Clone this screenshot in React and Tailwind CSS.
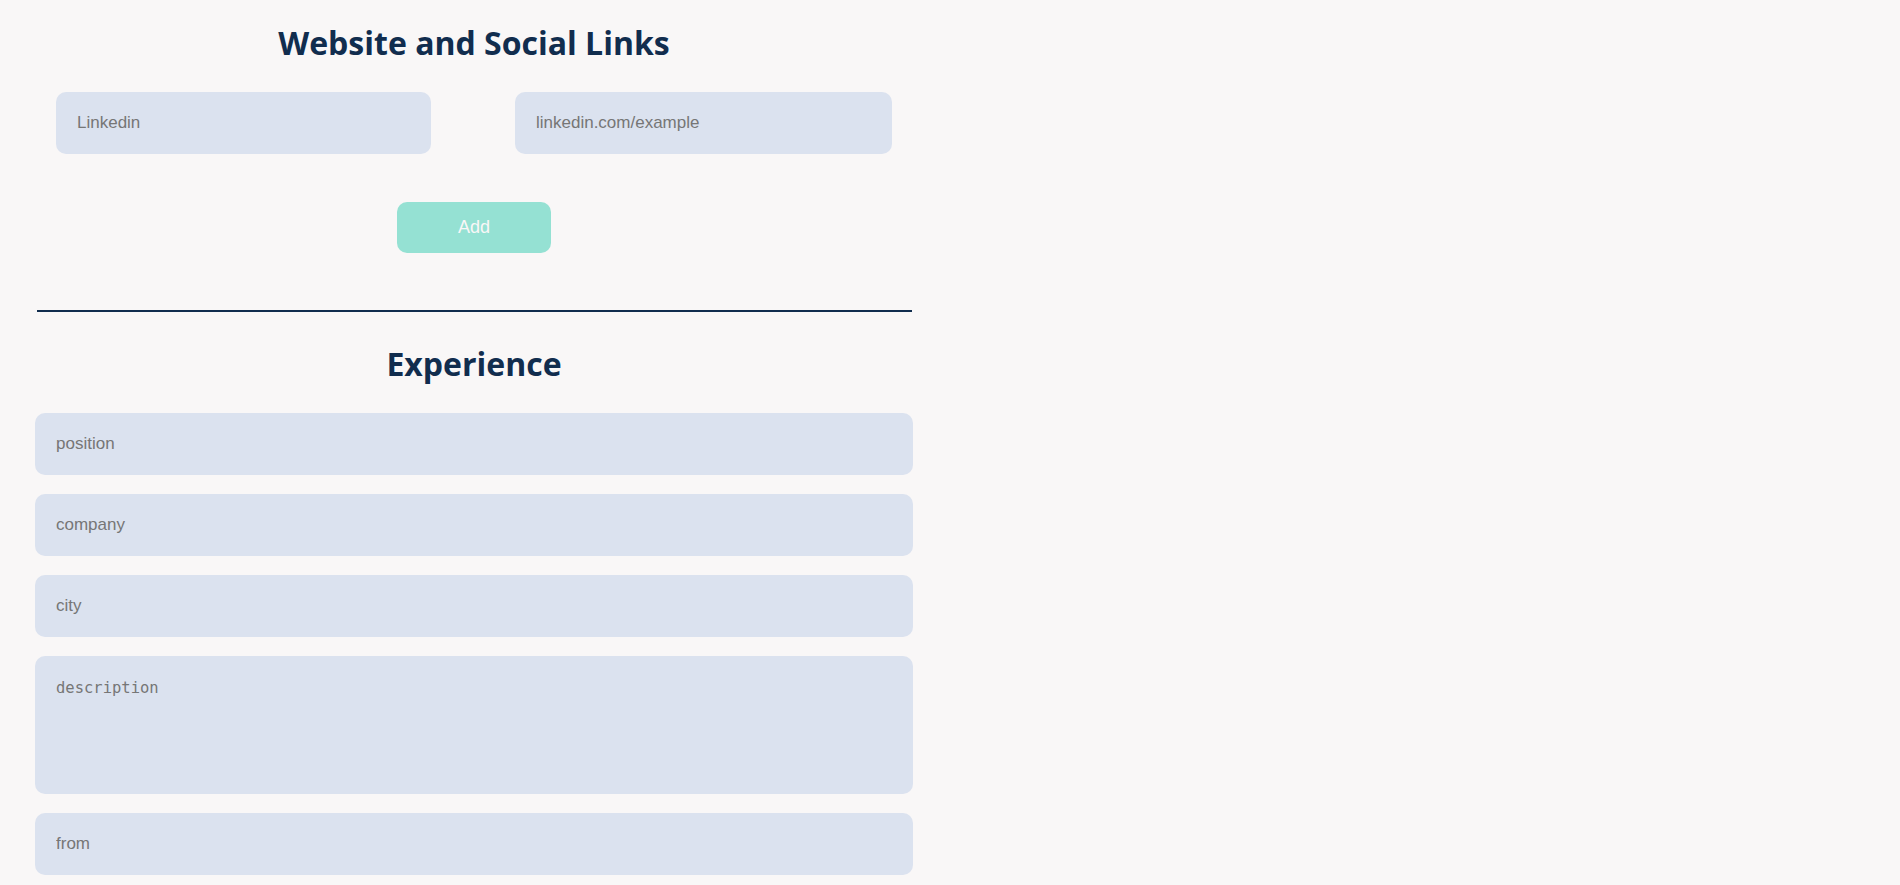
const Field = ({ placeholder, className = '' }) => (
  <input
    type="text"
    placeholder={placeholder}
    className={`h-[62px] rounded-[10px] bg-[#dbe2ef] pl-[21px] pr-4 text-[17px] text-[#112d4e] placeholder:text-[#767676] outline-none font-['Liberation_Sans',Arial,sans-serif] ${className}`}
  />
)

const App = () => {
  return (
    <div className="min-h-[885px] w-full bg-[#f9f7f7]">
      <div className="w-[948px] flex flex-col items-center">
        <h2 className="pt-[23px] text-[32px] leading-[40px] font-bold text-[#112d4e] font-['Open_Sans',sans-serif]">
          Website and Social Links
        </h2>
        <div className="mt-[29px] flex gap-[84px]">
          <Field placeholder="Linkedin" className="w-[375px]" />
          <Field placeholder="linkedin.com/example" className="w-[377px]" />
        </div>
        <button className="mt-[48px] h-[51px] w-[154px] rounded-[10px] bg-[#95e1d3] text-[18px] text-[#f9f7f7] font-['Liberation_Sans',Arial,sans-serif]">
          Add
        </button>
        <hr className="mt-[57px] h-[2px] w-[875px] border-0 bg-[#112d4e]" />
        <h2 className="mt-[32px] text-[32px] leading-[40px] font-bold text-[#112d4e] font-['Open_Sans',sans-serif]">
          Experience
        </h2>
        <div className="mt-[29px] flex w-[878px] flex-col gap-[19px]">
          <Field placeholder="position" className="w-full h-[61.5px]" />
          <Field placeholder="company" className="w-full h-[61.5px]" />
          <Field placeholder="city" className="w-full h-[61.5px]" />
          <textarea
            placeholder="description"
            className="h-[138px] w-full resize-none rounded-[10px] bg-[#dbe2ef] pl-[21px] pt-[21px] pr-4 text-[15.5px] text-[#112d4e] placeholder:text-[#767676] outline-none font-['DejaVu_Sans_Mono',monospace]"
          />
          <Field placeholder="from" className="w-full h-[61.5px]" />
        </div>
      </div>
    </div>
  )
}

export default App
